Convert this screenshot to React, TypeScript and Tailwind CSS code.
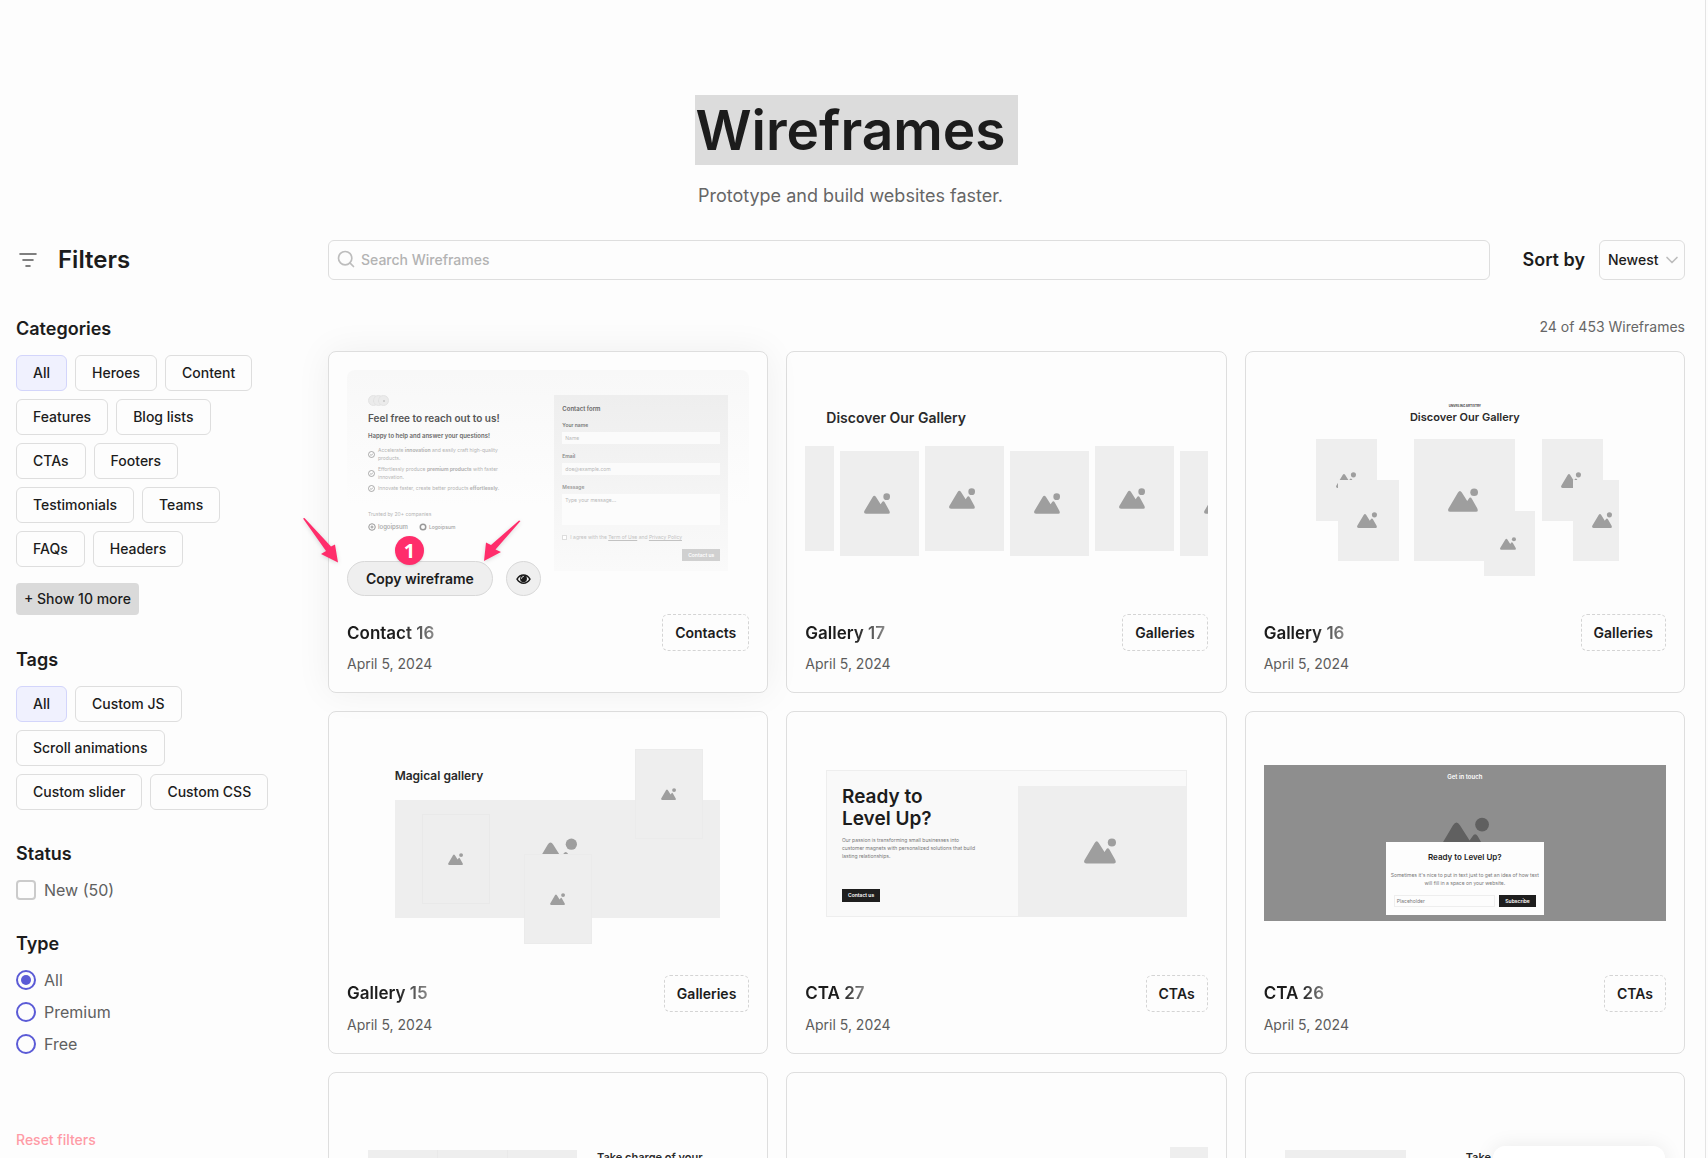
import React from "react";
import { ChevronDown, Search } from "lucide-react";

const categories = ["All", "Heroes", "Content", "Features", "Blog lists", "CTAs", "Footers", "Testimonials", "Teams", "FAQs", "Headers"];
const tags = ["All", "Custom JS", "Scroll animations", "Custom slider", "Custom CSS"];

function Mountains({ className }: { className: string }) {
  return (
    <svg viewBox="0 0 78 63" className={className} fill="currentColor" aria-hidden="true">
      <path d="M6 62 Q-2 62 1 54 L26 12 Q31 4 36 12 L50 34 L54 28 Q58 22 62 28 L76 53 Q80 62 73 62 Z" />
      <circle cx="68" cy="11" r="10" />
    </svg>
  );
}

function ImageBlock({ className, icon }: { className: string; icon: string }) {
  return (
    <div className={`flex items-center justify-center bg-[#eeeeee] text-[#9e9e9e] ${className}`}>
      <Mountains className={`shrink-0 ${icon}`} />
    </div>
  );
}

function Chips({ items }: { items: string[] }) {
  return (
    <div className="flex flex-wrap gap-2">
      {items.map((item) => (
        <button
          key={item}
          type="button"
          className={
            item === "All"
              ? "h-9 rounded-md border border-[#d3d5fb] bg-[#f0f1fe] px-4 text-sm font-medium"
              : "h-9 rounded-md border border-[#dedede] px-4 text-sm font-medium"
          }
        >
          {item}
        </button>
      ))}
    </div>
  );
}

function SectionTitle({ children }: { children: React.ReactNode }) {
  return <h3 className="mb-[14px] text-lg leading-6 font-semibold">{children}</h3>;
}

function CheckItem({ children }: { children: React.ReactNode }) {
  return (
    <li className="flex items-center gap-[3px]">
      <svg viewBox="0 0 14 14" className="size-[7px] shrink-0" fill="none" stroke="#8a8a8a" strokeWidth="1.4" aria-hidden="true">
        <circle cx="7" cy="7" r="6" />
        <path d="M4.5 7.2 6.4 9l3.2-3.6" />
      </svg>
      <p>{children}</p>
    </li>
  );
}

function Avatar({ className = "" }: { className?: string }) {
  return (
    <span className={`flex size-[11px] items-center justify-center rounded-full border border-[#e4e4e4] bg-[#ebebeb] ${className}`}>
      <span className="size-[2px] rounded-full bg-[#c4c4c4]" />
    </span>
  );
}

function ContactPreview() {
  return (
    <div className="flex h-full items-start rounded-lg bg-linear-to-b from-[#f8f8f8] to-[#fdfdfd] to-60% pt-[25px] pr-[21px] pl-[21px]">
      <div className="flex-1 text-[#b4b4b4]">
        <div className="flex">
          <Avatar />
          <Avatar className="-ml-[6px]" />
          <Avatar className="-ml-[6px]" />
        </div>
        <h4 className="mt-[5px] text-[10px] leading-[14px] font-semibold text-[#565656]">Feel free to reach out to us!</h4>
        <p className="mt-[7px] text-[6px] leading-[8px] font-semibold text-[#6a6a6a]">Happy to help and answer your questions!</p>
        <ul className="mt-[6px] flex flex-col gap-[3px] text-[5px] leading-[8px] whitespace-nowrap">
          <CheckItem>
            Accelerate <b>innovation</b> and easily craft high-quality
            <br />
            products.
          </CheckItem>
          <CheckItem>
            Effortlessly produce <b>premium products</b> with faster
            <br />
            innovation.
          </CheckItem>
          <CheckItem>
            Innovate faster, create better products <b>effortlessly</b>.
          </CheckItem>
        </ul>
        <p className="mt-[19px] text-[5px] leading-[6px]">Trusted by 20+ companies</p>
        <div className="mt-[6px] flex items-center text-[6px] leading-[8px] font-medium text-[#a4a4a4]">
          <svg viewBox="0 0 16 16" className="mr-[2px] size-[8px]" fill="none" stroke="#999999" strokeWidth="2" aria-hidden="true">
            <circle cx="8" cy="8" r="6.5" />
            <circle cx="8" cy="8" r="2" />
          </svg>
          logoipsum
          <svg viewBox="0 0 16 16" className="mr-[2px] ml-[11px] size-[8px]" fill="none" stroke="#999999" strokeWidth="3" aria-hidden="true">
            <circle cx="8" cy="8" r="5.5" />
          </svg>
          <span className="text-[5px]">Logoipsum</span>
        </div>
      </div>
      <div className="flex w-[174px] flex-col bg-linear-to-b from-[#eeeeee] to-[#fafafa] px-[8px] py-[10px] text-[5px] leading-[6px] text-[#b8b8b8]">
        <h4 className="text-[6px] leading-[8px] font-semibold text-[#666666]">Contact form</h4>
        <p className="mt-[9px] font-semibold text-[#777777]">Your name</p>
        <p className="mt-[4px] h-[12px] bg-[#fbfbfb] px-[3px] leading-[12px]">Name</p>
        <p className="mt-[9px] font-semibold text-[#888888]">Email</p>
        <p className="mt-[4px] h-[12px] bg-[#fbfbfb] px-[3px] leading-[12px]">doe@example.com</p>
        <p className="mt-[9px] font-semibold text-[#999999]">Message</p>
        <p className="mt-[4px] h-[31px] bg-[#fcfcfc] px-[3px] pt-[3px]">Type your message...</p>
        <p className="mt-[9px] flex items-center gap-[3px] whitespace-nowrap text-[#c2c2c2]">
          <span className="size-[5px] border border-[#dddddd] bg-white" />
          <span>I agree with the <u>Term of Use</u> and <u>Privacy Policy</u></span>
        </p>
        <span className="mt-[9px] self-end bg-[#d0d0d0] px-[6px] leading-[12px] font-semibold text-white">Contact us</span>
      </div>
    </div>
  );
}

function CarouselPreview() {
  return (
    <div className="flex h-full flex-col overflow-hidden pt-[39px]">
      <h4 className="pl-[21px] text-[14px] leading-[18px] font-semibold text-[#2a2a2a]">Discover Our Gallery</h4>
      <div className="mt-[19px] flex items-start justify-center gap-[6px]">
        <ImageBlock className="h-[105px] w-[79px] shrink-0" icon="mr-1 w-[26px]" />
        <ImageBlock className="mt-[5px] h-[105px] w-[79px] shrink-0" icon="mr-1 w-[26px]" />
        <ImageBlock className="h-[105px] w-[79px] shrink-0" icon="mr-1 w-[26px]" />
        <ImageBlock className="mt-[5px] h-[105px] w-[79px] shrink-0" icon="mr-1 w-[26px]" />
        <ImageBlock className="h-[105px] w-[79px] shrink-0" icon="mr-1 w-[26px]" />
        <ImageBlock className="mt-[5px] h-[105px] w-[79px] shrink-0" icon="mr-1 w-[26px]" />
      </div>
    </div>
  );
}

function CollagePreview() {
  return (
    <div className="flex h-full flex-col items-center pt-[34px]">
      <p className="text-[3px] leading-[4px] font-bold text-[#444444]">UNVEILING ARTISTRY</p>
      <h4 className="mt-[1px] text-[11px] leading-[16px] font-semibold text-[#2a2a2a]">Discover Our Gallery</h4>
      <div className="relative mt-[14px] ml-[5px] h-[137px] w-[303px] overflow-hidden">
        <ImageBlock className="absolute top-0 left-0 h-[82px] w-[61px]" icon="w-[20px]" />
        <ImageBlock className="absolute top-[41px] left-[22px] h-[81px] w-[61px]" icon="mr-[2px] w-[20px]" />
        <ImageBlock className="absolute top-0 left-[98px] h-[122px] w-[101px]" icon="mr-[2px] w-[30px]" />
        <ImageBlock className="absolute top-[72px] left-[168px] h-[65px] w-[51px]" icon="mr-[2px] w-[16px]" />
        <ImageBlock className="absolute top-0 left-[226px] h-[82px] w-[61px]" icon="mr-[2px] w-[20px]" />
        <ImageBlock className="absolute top-[41px] left-[257px] h-[81px] w-[61px]" icon="mr-[2px] w-[20px]" />
      </div>
    </div>
  );
}

function LayeredPreview() {
  return (
    <div className="flex h-full justify-center pt-[19px]">
      <div className="relative ml-[18px] w-[325px]">
        <h4 className="mt-[19px] text-[12px] leading-[16px] font-semibold text-[#2a2a2a]">Magical gallery</h4>
        <ImageBlock className="mt-[16px] h-[118px]" icon="mr-1 mb-2 w-[44px]" />
        <ImageBlock className="absolute top-[65px] left-[27px] h-[90px] w-[68px] border border-[#e9e9e9]" icon="w-[15px]" />
        <ImageBlock className="absolute top-[105px] left-[129px] h-[90px] w-[68px] border border-[#ebebeb]" icon="w-[15px]" />
        <ImageBlock className="absolute top-0 left-[240px] h-[90px] w-[68px] border border-[#ebebeb]" icon="w-[15px]" />
      </div>
    </div>
  );
}

function SplitPreview() {
  return (
    <div className="flex h-full items-center justify-center">
      <div className="flex h-[147px] w-[361px] border border-[#eeeeee] bg-[#f9f9f9]">
        <div className="flex flex-1 flex-col items-start pt-[15px] pb-[14px] pl-[15px]">
          <h4 className="text-[19px] leading-[22px] font-semibold">
            Ready to
            <br />
            Level Up?
          </h4>
          <p className="mt-[6px] text-[5px] leading-[8px] text-[#777777]">
            Our passion is transforming small businesses into
            <br />
            customer magnets with personalized solutions that build
            <br />
            lasting relationships.
          </p>
          <span className="mt-auto bg-[#1e1e1e] px-[6px] text-[5px] leading-[13px] font-semibold text-white">Contact us</span>
        </div>
        <ImageBlock className="mt-[15px] w-[168px]" icon="mr-1 w-[32px]" />
      </div>
    </div>
  );
}

function NewsletterPreview() {
  return (
    <div className="flex h-full items-center">
      <div className="relative flex h-[156px] w-full flex-col items-center bg-[#8e8e8e] pt-[7px]">
        <h4 className="text-[6px] leading-[9px] font-semibold text-white">Get in touch</h4>
        <Mountains className="mt-[36px] mr-[6px] w-[54px] text-[#606060]" />
        <div className="absolute bottom-[6px] flex w-[158px] flex-col items-center bg-[#fdfdfd] px-[4px] pt-[10px] pb-[8px] text-center">
          <h5 className="text-[8px] leading-[10px] font-semibold">Ready to Level Up?</h5>
          <p className="mt-[9px] text-[5px] leading-[8px] whitespace-nowrap text-[#777777]">
            Sometimes it's nice to put in text just to get an idea of how text
            <br />
            will fill in a space on your website.
          </p>
          <div className="mt-[8px] flex w-[142px] gap-[4px] text-left text-[5px]">
            <span className="flex-1 border border-[#eeeeee] px-[2px] leading-[10px] text-[#777777]">Placeholder</span>
            <span className="bg-[#1e1e1e] px-[6px] leading-[12px] font-semibold text-white">Subscribe</span>
          </div>
        </div>
      </div>
    </div>
  );
}

function GridTextPreview() {
  return (
    <div className="flex h-full items-start gap-[20px] pt-[59px] pl-[21px]">
      <div className="grid h-[110px] w-[209px] grid-cols-3 gap-px bg-[#e9e9e9]">
        <div className="bg-[#eeeeee]" />
        <div className="bg-[#eeeeee]" />
        <div className="bg-[#eeeeee]" />
      </div>
      <h4 className="text-[11px] leading-[14px] font-semibold text-[#2a2a2a]">Take charge of your</h4>
    </div>
  );
}

function CornerPreview() {
  return (
    <div className="flex h-full justify-end pt-[56px]">
      <div className="h-[110px] w-[38px] bg-[#eeeeee]" />
    </div>
  );
}

function SidePreview() {
  return (
    <div className="flex h-full items-start gap-[60px] pt-[59px] pl-[21px]">
      <div className="h-[110px] w-[121px] bg-[#eeeeee]" />
      <h4 className="text-[11px] leading-[14px] font-semibold whitespace-nowrap text-[#2a2a2a]">Take charge of your</h4>
    </div>
  );
}

function PreviewActions() {
  return (
    <div className="absolute bottom-0 left-0 flex gap-[13px]">
      <button type="button" className="h-[35px] rounded-full border border-[#d8d8d8] bg-[#efefef] px-[18px] text-sm font-semibold">
        Copy wireframe
      </button>
      <button type="button" aria-label="Preview" className="flex size-[35px] items-center justify-center rounded-full border border-[#d8d8d8] bg-[#efefef]">
        <svg viewBox="0 0 44 30" className="w-[15px]" aria-hidden="true">
          <path d="M3 15C8 7 14 3 22 3s14 4 19 12c-5 8-11 12-19 12S8 23 3 15Z" fill="none" stroke="#1a1a1a" strokeWidth="4.5" strokeLinejoin="round" />
          <circle cx="22" cy="14" r="10" fill="#1a1a1a" />
          <path d="M16 13a6 6 0 0 1 6-6" fill="none" stroke="#efefef" strokeWidth="2.4" strokeLinecap="round" />
        </svg>
      </button>
    </div>
  );
}

function Annotations() {
  return (
    <div className="pointer-events-none absolute top-[165px] -left-[26px]">
      <svg viewBox="0 0 220 50" className="h-[50px] w-[220px] drop-shadow-sm" fill="#ff2d6b" aria-hidden="true">
        <path d="M0 1.5 1.5 1 28 29.5 32 27.5 35 45.5 18 37 23 34Z" />
        <path d="M217.500 4 216 3.500 188 28 183 25.500 181 44 198 35 192.500 32.500Z" />
      </svg>
      <span className="absolute top-[19px] left-[92px] flex size-[29px] items-center justify-center rounded-full bg-[#ff2d6b] font-[Open_Sans] text-xl font-bold text-white shadow-sm">
        1
      </span>
    </div>
  );
}

type Wireframe = { name: string; number: string; tag: string; preview: React.ReactNode; active?: boolean };

const wireframes: Wireframe[] = [
  { name: "Contact", number: "16", tag: "Contacts", preview: <ContactPreview />, active: true },
  { name: "Gallery", number: "17", tag: "Galleries", preview: <CarouselPreview /> },
  { name: "Gallery", number: "16", tag: "Galleries", preview: <CollagePreview /> },
  { name: "Gallery", number: "15", tag: "Galleries", preview: <LayeredPreview /> },
  { name: "CTA", number: "27", tag: "CTAs", preview: <SplitPreview /> },
  { name: "CTA", number: "26", tag: "CTAs", preview: <NewsletterPreview /> },
  { name: "CTA", number: "25", tag: "CTAs", preview: <GridTextPreview /> },
  { name: "CTA", number: "24", tag: "CTAs", preview: <CornerPreview /> },
  { name: "CTA", number: "23", tag: "CTAs", preview: <SidePreview /> },
];

function Card({ item }: { item: Wireframe }) {
  return (
    <article
      className={
        item.active
          ? "relative rounded-lg border border-[#dedede] bg-[#fdfdfd] p-[18px] shadow-[0_0_36px_rgba(0,0,0,0.06)]"
          : "rounded-lg border border-[#dedede] bg-[#fdfdfd] p-[18px]"
      }
    >
      <div className="relative aspect-video">
        {item.preview}
        {item.active && <PreviewActions />}
      </div>
      <div className="mt-[18px] flex items-center justify-between">
        <h2 className="bg-linear-to-r from-[#1c1c1c] from-60% to-[#8a8a8a] bg-clip-text text-[17px] leading-7 font-semibold text-transparent">
          {item.name} {item.number}
        </h2>
        <a href="#category" className="rounded-md border border-dashed border-[#d4d4d4] px-3 text-sm leading-[35px] font-semibold">
          {item.tag}
        </a>
      </div>
      <p className="mt-[3px] text-sm text-[#5c5c5c]">April 5, 2024</p>
      {item.active && <Annotations />}
    </article>
  );
}

function Radio({ label, checked }: { label: string; checked?: boolean }) {
  return (
    <label className="flex h-5 items-center gap-2 text-base text-[#606060]">
      <input
        type="radio"
        name="type"
        defaultChecked={checked}
        className="grid size-5 appearance-none place-items-center rounded-full border-2 border-[#5b5bd6] checked:before:size-[10px] checked:before:rounded-full checked:before:bg-[#5b5bd6]"
      />
      {label}
    </label>
  );
}

export default function App() {
  return (
    <div className="h-screen overflow-x-hidden overflow-y-auto bg-[#fdfdfd] pr-[2px] font-[Inter,sans-serif] text-[#1c1c1c] [scrollbar-width:none]">
      <div className="min-h-full border-r border-[#e4e4e4] pr-5 pl-4">
        <header className="pt-[95px] text-center">
          <h1 className="text-[55px] leading-[70px] font-semibold">
            <span className="-mr-3 inline-block bg-[#dcdcdc] pr-3">Wireframes</span>
          </h1>
          <p className="mt-[19px] text-lg leading-6 text-[#666666]">Prototype and build websites faster.</p>
        </header>

        <div className="mt-8 flex gap-12">
          <aside className="w-[264px] shrink-0">
            <div className="flex h-10 items-center">
              <svg viewBox="0 0 18 16" className="ml-[3px] h-4 w-[18px]" stroke="#555555" strokeWidth="1.6" strokeLinecap="round" aria-hidden="true">
                <path d="M1 2h16M4 8h10M7 14h4" />
              </svg>
              <h2 className="ml-[21px] text-2xl font-semibold">Filters</h2>
            </div>
            <div className="mt-[37px] flex flex-col gap-8">
              <section>
                <SectionTitle>Categories</SectionTitle>
                <Chips items={categories} />
                <button type="button" className="mt-4 mb-px h-8 rounded bg-[#dadada] px-2 text-sm font-medium">
                  + Show 10 more
                </button>
              </section>
              <section>
                <SectionTitle>Tags</SectionTitle>
                <Chips items={tags} />
              </section>
              <section>
                <SectionTitle>Status</SectionTitle>
                <label className="flex h-5 items-center gap-2 text-base text-[#606060]">
                  <input type="checkbox" className="size-5 appearance-none rounded border-2 border-[#cbcbcb]" />
                  New (50)
                </label>
              </section>
              <section>
                <SectionTitle>Type</SectionTitle>
                <div className="flex flex-col gap-3">
                  <Radio label="All" checked />
                  <Radio label="Premium" />
                  <Radio label="Free" />
                </div>
              </section>
            </div>
            <a href="#reset" className="mt-[76px] block text-sm font-medium text-[#ff9ba6]">
              Reset filters
            </a>
          </aside>

          <main className="min-w-0 flex-1">
            <div className="flex h-10 items-center">
              <label className="relative flex-1">
                <Search className="absolute top-[9px] left-2 size-5 text-[#bdbdbd]" strokeWidth={2} />
                <input
                  type="text"
                  aria-label="Search Wireframes"
                  placeholder="Search Wireframes"
                  className="block h-10 w-full rounded-md border border-[#dedede] pb-px pl-8 text-sm placeholder:font-medium placeholder:text-[#b3b3b3]"
                />
              </label>
              <label htmlFor="sort" className="ml-8 text-lg font-semibold">
                Sort by
              </label>
              <div className="relative ml-[14px]">
                <select id="sort" className="h-10 w-[86px] appearance-none rounded-md border border-[#dedede] pl-2 text-sm font-medium">
                  <option>Newest</option>
                </select>
                <ChevronDown className="pointer-events-none absolute top-[10px] right-[3px] size-5 text-[#bdbdbd]" strokeWidth={2} />
              </div>
            </div>
            <p className="mt-[37px] text-right text-sm text-[#666666]">24 of 453 Wireframes</p>
            <div className="mt-[14px] grid grid-cols-3 gap-[18px]">
              {wireframes.map((item) => (
                <Card key={item.name + item.number} item={item} />
              ))}
            </div>
          </main>
        </div>
      </div>
      <div className="fixed right-[43px] -bottom-9 h-12 w-[172px] rounded-xl bg-white shadow-[0_0_20px_rgba(0,0,0,0.08)]" />
    </div>
  );
}
